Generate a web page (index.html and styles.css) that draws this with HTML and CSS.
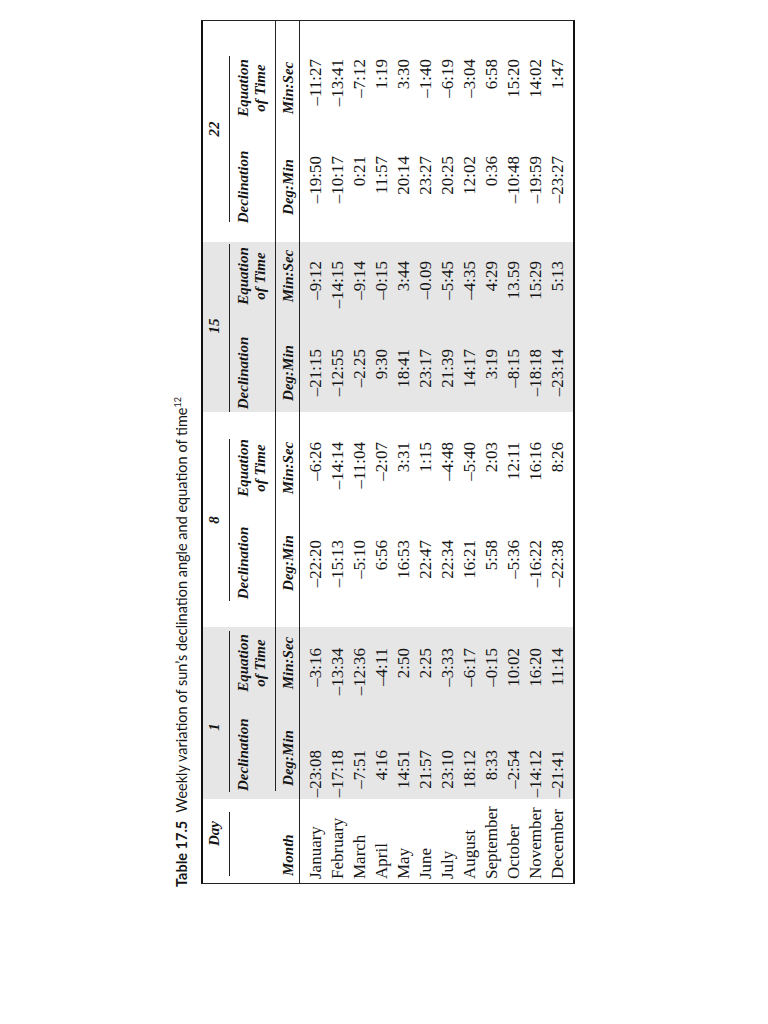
FILE: index.html
```html
<!DOCTYPE html>
<html>
<head>
<meta charset="utf-8">
<link rel="stylesheet" href="styles.css">
</head>
<body>
<div class="stage">
<div class="figure">
  <div class="caption"><span class="cap-label">Table 17.5</span><span class="cap-text">Weekly variation of sun’s declination angle and equation of time<sup>12</sup></span></div>
  <div class="table">
    <div class="hd r1"><div class="ul ul-day">Day</div></div>
    <div class="hd r1 grp"><div class="ul ul-g1">1</div></div>
    <div class="hd r1 grp"><div class="ul ul-g8">8</div></div>
    <div class="hd r1 grp"><div class="ul ul-g15">15</div></div>
    <div class="hd r1 grp"><div class="ul ul-g22">22</div></div>

    <div class="hd r2 blank"></div>
    <div class="hd r2 s1 indent">Declination</div>
    <div class="hd r2 s2">Equation<br>of Time</div>
    <div class="hd r2 s3">Declination</div>
    <div class="hd r2 s4">Equation<br>of Time</div>
    <div class="hd r2 s5">Declination</div>
    <div class="hd r2 s6">Equation<br>of Time</div>
    <div class="hd r2 s7">Declination</div>
    <div class="hd r2 s8">Equation<br>of Time</div>

    <div class="hd r3 month-h">Month</div>
    <div class="hd r3 s1">Deg:Min</div>
    <div class="hd r3 s2">Min:Sec</div>
    <div class="hd r3 s3">Deg:Min</div>
    <div class="hd r3 s4">Min:Sec</div>
    <div class="hd r3 s5">Deg:Min</div>
    <div class="hd r3 s6">Min:Sec</div>
    <div class="hd r3 s7">Deg:Min</div>
    <div class="hd r3 s8">Min:Sec</div>

    <div class="m">January</div><div class="n c1">–23:08</div><div class="n c2">–3:16</div><div class="n c3">–22:20</div><div class="n c4">–6:26</div><div class="n c5">–21:15</div><div class="n c6">–9:12</div><div class="n c7">–19:50</div><div class="n c8">–11:27</div>
    <div class="m">February</div><div class="n c1">–17:18</div><div class="n c2">–13:34</div><div class="n c3">–15:13</div><div class="n c4">–14:14</div><div class="n c5">–12:55</div><div class="n c6">–14:15</div><div class="n c7">–10:17</div><div class="n c8">–13:41</div>
    <div class="m">March</div><div class="n c1">–7:51</div><div class="n c2">–12:36</div><div class="n c3">–5:10</div><div class="n c4">–11:04</div><div class="n c5">–2.25</div><div class="n c6">–9:14</div><div class="n c7">0:21</div><div class="n c8">–7:12</div>
    <div class="m">April</div><div class="n c1">4:16</div><div class="n c2">–4:11</div><div class="n c3">6:56</div><div class="n c4">–2:07</div><div class="n c5">9:30</div><div class="n c6">–0:15</div><div class="n c7">11:57</div><div class="n c8">1:19</div>
    <div class="m">May</div><div class="n c1">14:51</div><div class="n c2">2:50</div><div class="n c3">16:53</div><div class="n c4">3:31</div><div class="n c5">18:41</div><div class="n c6">3:44</div><div class="n c7">20:14</div><div class="n c8">3:30</div>
    <div class="m">June</div><div class="n c1">21:57</div><div class="n c2">2:25</div><div class="n c3">22:47</div><div class="n c4">1:15</div><div class="n c5">23:17</div><div class="n c6">–0.09</div><div class="n c7">23:27</div><div class="n c8">–1:40</div>
    <div class="m">July</div><div class="n c1">23:10</div><div class="n c2">–3:33</div><div class="n c3">22:34</div><div class="n c4">–4:48</div><div class="n c5">21:39</div><div class="n c6">–5:45</div><div class="n c7">20:25</div><div class="n c8">–6:19</div>
    <div class="m">August</div><div class="n c1">18:12</div><div class="n c2">–6:17</div><div class="n c3">16:21</div><div class="n c4">–5:40</div><div class="n c5">14:17</div><div class="n c6">–4:35</div><div class="n c7">12:02</div><div class="n c8">–3:04</div>
    <div class="m">September</div><div class="n c1">8:33</div><div class="n c2">–0:15</div><div class="n c3">5:58</div><div class="n c4">2:03</div><div class="n c5">3:19</div><div class="n c6">4:29</div><div class="n c7">0:36</div><div class="n c8">6:58</div>
    <div class="m">October</div><div class="n c1">–2:54</div><div class="n c2">10:02</div><div class="n c3">–5:36</div><div class="n c4">12:11</div><div class="n c5">–8:15</div><div class="n c6">13.59</div><div class="n c7">–10:48</div><div class="n c8">15:20</div>
    <div class="m">November</div><div class="n c1">–14:12</div><div class="n c2">16:20</div><div class="n c3">–16:22</div><div class="n c4">16:16</div><div class="n c5">–18:18</div><div class="n c6">15:29</div><div class="n c7">–19:59</div><div class="n c8">14:02</div>
    <div class="m">December</div><div class="n c1">–21:41</div><div class="n c2">11:14</div><div class="n c3">–22:38</div><div class="n c4">8:26</div><div class="n c5">–23:14</div><div class="n c6">5:13</div><div class="n c7">–23:27</div><div class="n c8">1:47</div>
  </div>
</div>
</div>
</body>
</html>
```

FILE: styles.css
```css
html, body {
  margin: 0;
  padding: 0;
  background: #ffffff;
}
body {
  width: 768px;
  height: 1024px;
  overflow: hidden;
}

/* footprint of the rotated page-table on screen */
.stage {
  width: 406px;
  height: 868px;
  margin: 20px 0 0 169px;
  overflow: hidden;
}

/* the table is typeset landscape and turned a quarter turn counter-clockwise */
.figure {
  width: 868px;
  color: #151515;
  transform-origin: 0 0;
  transform: translate(0, 868px) rotate(-90deg);
}

.caption {
  display: flex;
  gap: 8px;
  padding: 3px 0 9px 1px;
  font-family: Lato, "Liberation Sans", sans-serif;
  font-size: 14.5px;
  line-height: 20px;
  white-space: nowrap;
}
.cap-label {
  font-weight: 700;
}
.caption sup {
  font-size: 9px;
  line-height: 0;
  vertical-align: 6px;
}

.table {
  margin-left: 4px;
  width: 862px;
  display: grid;
  grid-template-columns: 84px 88px 84px 116px 99px 89px 81px 105px 116px;
  grid-template-rows: 27px 46px 29px;
  grid-auto-rows: 22px;
  padding-bottom: 4px;
  border-top: 2px solid #111;
  border-bottom: 2px solid #111;
  border-left: 1px solid #222;
  border-right: 1px solid #222;
  background: linear-gradient(to right,
    transparent 84px, #e6e6e6 84px, #e6e6e6 256px, transparent 256px,
    transparent 471px, #e6e6e6 471px, #e6e6e6 641px, transparent 641px);
  font-family: "Liberation Serif", "Times New Roman", serif;
  font-size: 17px;
}

.hd {
  font-weight: 700;
  font-style: italic;
  font-size: 15px;
  line-height: 17px;
  text-align: center;
  box-sizing: border-box;
}

/* row 1: day + group numbers with underlines */
.grp {
  grid-column: span 2;
}
.ul {
  box-sizing: border-box;
  height: 27px;
  padding-top: 3px;
  border-bottom: 1px solid #222;
}
.ul-day {
  margin: 0 13px 0 7px;
  padding-left: 30px;
  text-align: left;
}
.ul-g1 {
  margin: 0 4px 0 7px;
  padding-right: 31px;
}
.ul-g8 {
  margin: 0 27px 0 26px;
}
.ul-g15 {
  margin: 0 2px 0 0;
  padding-left: 4px;
}
.ul-g22 {
  margin: 0 35px 0 20px;
  padding-left: 20px;
}

/* row 2: sub headings */
.r2 {
  padding-top: 5px;
  border-bottom: 1px solid #222;
}
.r2.blank {
  border-bottom: none;
}
.r2.indent {
  margin-left: 8px;
  padding-right: 14px;
}

/* row 3: units */
.r3 {
  padding-top: 4px;
  margin-bottom: 5px;
  border-bottom: 1px solid #222;
}
.month-h {
  text-align: left;
  padding-left: 7px;
}

/* header centre shifts per column */
.s1 { padding-right: 6px; }
.s2 { padding-left: 12px; }
.s3 { padding-left: 12px; }
.s4 { padding-right: 13px; }
.s5 { padding-right: 11px; }
.s6 { padding-left: 13px; }
.s7 { padding-left: 5px; }
.s8 { padding-right: 18px; }

/* data */
.m,
.n {
  line-height: 22px;
  white-space: nowrap;
}
.m {
  padding-left: 4px;
  text-align: left;
}
.n {
  text-align: right;
}
.c1 { padding-right: 39px; }
.c2 { padding-right: 21px; }
.c3 { padding-right: 29px; }
.c4 { padding-right: 30px; }
.c5 { padding-right: 26px; }
.c6 { padding-right: 19px; }
.c7 { padding-right: 19px; }
.c8 { padding-right: 38px; }
```
